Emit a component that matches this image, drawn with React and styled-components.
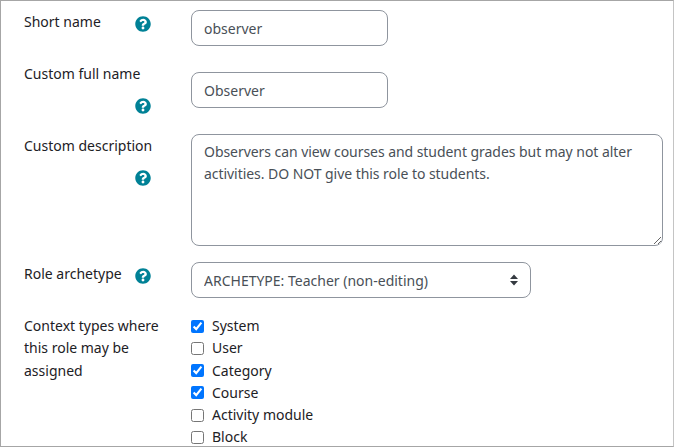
import styled, { createGlobalStyle } from "styled-components";
import { FaQuestionCircle } from "react-icons/fa";

const GlobalStyle = createGlobalStyle`
  html, body {
    margin: 0;
    background: #fff;
  }
  body {
    font-family: "Noto Sans", "Open Sans", sans-serif;
    font-size: 14px;
    line-height: 22.4px;
    color: #1d2125;
  }
`;

const Frame = styled.div`
  box-sizing: border-box;
  width: 674px;
  height: 447px;
  padding: 9px 0 0 23px;
  border: 1px solid #a6a6a6;
  border-right-color: #c4c4c4;
  margin: 0;
  overflow: hidden;
`;

const Row = styled.div`
  display: grid;
  grid-template-columns: 135px 1fr;
  column-gap: 32px;
  margin-bottom: 16px;
`;

const LabelCol = styled.div`
  display: flex;
  flex-wrap: wrap;
  align-items: flex-start;
  align-self: start;
  margin-top: 1px;
`;

const HelpSlot = styled.span`
  display: block;
  height: 16px;
  margin: ${(p) => (p.$below ? "12.5px 8px 4px auto" : "5px 8px 0 auto")};
  color: #008196;
  font-size: 16px;
  line-height: 16px;
`;

const Control = styled.div`
  align-self: center;
  position: relative;
  width: ${(p) => p.$width}px;
`;

const fieldStyles = `
  display: block;
  box-sizing: border-box;
  width: 100%;
  padding: 6px 12px;
  border: 1px solid #8f959e;
  border-radius: 8px;
  background: #fff;
  color: #495057;
  font-family: "Noto Sans", "Open Sans", sans-serif;
  font-size: 14px;
  line-height: 22.4px;
  outline: none;
`;

const TextInput = styled.input`
  ${fieldStyles}
  height: 36px;
  padding-top: ${(p) => (p.$nudge ? "7px" : "6px")};
  padding-bottom: ${(p) => (p.$nudge ? "5px" : "6px")};
`;

const TextArea = styled.textarea`
  ${fieldStyles}
  height: 112px;
  margin: 0;
  letter-spacing: -0.05px;
  resize: both;
`;

const Select = styled.select`
  ${fieldStyles}
  height: 36px;
  padding-top: 7px;
  padding-bottom: 5px;
  appearance: none;
`;

const SelectArrow = styled.svg`
  position: absolute;
  top: 12px;
  right: 12px;
  width: 10px;
  height: 12px;
  pointer-events: none;
`;

const CheckList = styled.div`
  display: flex;
  flex-direction: column;
  margin-top: 1.2px;
`;

const CheckRow = styled.label`
  display: flex;
  align-items: center;
  height: 22.25px;
`;

const CheckBox = styled.input`
  width: 13px;
  height: 13px;
  margin: 0 8px 0 0;
  accent-color: #0075ff;
`;

const helpIcon = <FaQuestionCircle />;

const contexts = [
  { name: "System", on: true },
  { name: "User", on: false },
  { name: "Category", on: true },
  { name: "Course", on: true },
  { name: "Activity module", on: false },
  { name: "Block", on: false },
];

const App = () => {
  return (
    <Frame>
      <GlobalStyle />
      <Row>
        <LabelCol>
          Short name
          <HelpSlot>{helpIcon}</HelpSlot>
        </LabelCol>
        <Control $width={197}>
          <TextInput defaultValue="observer" />
        </Control>
      </Row>
      <Row>
        <LabelCol>
          Custom full name
          <HelpSlot $below>{helpIcon}</HelpSlot>
        </LabelCol>
        <Control $width={197}>
          <TextInput $nudge defaultValue="Observer" />
        </Control>
      </Row>
      <Row>
        <LabelCol>
          Custom description
          <HelpSlot $below>{helpIcon}</HelpSlot>
        </LabelCol>
        <Control $width={472}>
          <TextArea defaultValue="Observers can view courses and student grades but may not alter activities. DO NOT give this role to students." />
        </Control>
      </Row>
      <Row>
        <LabelCol>
          Role archetype
          <HelpSlot>{helpIcon}</HelpSlot>
        </LabelCol>
        <Control $width={340}>
          <Select defaultValue="teacher">
            <option value="teacher">ARCHETYPE: Teacher (non-editing)</option>
          </Select>
          <SelectArrow viewBox="0 0 10 12">
            <path d="M5 0.5 L9 5 H1 Z M1 7 H9 L5 11.5 Z" fill="#343a40" />
          </SelectArrow>
        </Control>
      </Row>
      <Row>
        <LabelCol>Context types where this role may be assigned</LabelCol>
        <CheckList>
          {contexts.map((c) => (
            <CheckRow key={c.name}>
              <CheckBox type="checkbox" defaultChecked={c.on} />
              {c.name}
            </CheckRow>
          ))}
        </CheckList>
      </Row>
    </Frame>
  );
};

export default App;
